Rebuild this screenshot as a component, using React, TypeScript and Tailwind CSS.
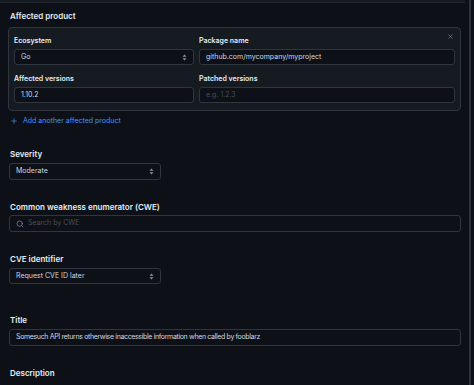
import { Search, X, Plus } from "lucide-react";

const font = { fontFamily: "Inter, 'Noto Sans', sans-serif" };

const SelectArrows = () => (
  <svg width="5" height="7" viewBox="0 0 5 7" className="shrink-0">
    <path d="M2.5 0.5 L4.5 2.7 L0.5 2.7 Z" fill="#8b949e" />
    <path d="M2.5 6.5 L4.5 4.3 L0.5 4.3 Z" fill="#8b949e" />
  </svg>
);

const Label = ({ children }) => (
  <div className="text-[7px] leading-[10px] font-semibold text-[#e6edf3] mb-[3px]">{children}</div>
);

const Heading = ({ children, className = "" }) => (
  <div className={`text-[8px] leading-[10px] font-semibold text-[#e6edf3] ${className}`}>{children}</div>
);

const SelectBox = ({ value, className = "" }) => (
  <div
    className={`flex items-center justify-between rounded-[3px] border border-[#30363d] bg-[#0d1117] px-[6px] text-[7px] text-[#d1d7e0] ${className}`}
  >
    <span>{value}</span>
    <SelectArrows />
  </div>
);

const InputBox = ({ value, placeholder = false, className = "" }) => (
  <div
    className={`flex items-center rounded-[3px] border border-[#30363d] bg-[#0d1117] px-[6px] text-[7px] ${
      placeholder ? "text-[#484f58]" : "text-[#d1d7e0]"
    } ${className}`}
  >
    {value}
  </div>
);

export default function App() {
  return (
    <div className="w-[474px] h-[385px] bg-[#0d1117] overflow-hidden flex" style={font}>
      <div className="w-[471px] h-full border-r-2 border-[#2d333b] relative">
        <div className="h-[3px] bg-[#161b22] border-b border-[#21262d] mr-[4px]" />
        <div className="pl-[9px] pr-[8px]">
          <Heading className="mt-[8px] pl-[1px]">Affected product</Heading>

          {/* affected product card */}
          <div className="relative mt-[6px] -ml-[1px] rounded-[4px] border border-[#30363d] bg-[#161b22] px-[5px] pt-[8px] pb-[7px]">
            <X className="absolute top-[5px] right-[6px] text-[#8b949e]" size={7} strokeWidth={2} />
            <div className="grid grid-cols-[180px_1fr] gap-x-[5px] gap-y-[9px]">
              <div>
                <Label>Ecosystem</Label>
                <SelectBox value="Go" className="h-[16px]" />
              </div>
              <div>
                <Label>Package name</Label>
                <InputBox value="github.com/mycompany/myproject" className="h-[16px]" />
              </div>
              <div>
                <Label>Affected versions</Label>
                <InputBox value="1.10.2" className="h-[16px]" />
              </div>
              <div>
                <Label>Patched versions</Label>
                <InputBox value="e.g. 1.2.3" placeholder className="h-[16px]" />
              </div>
            </div>
          </div>

          <div className="mt-[5px] flex items-center gap-[5px] text-[7px] leading-[10px] text-[#4493f8] pl-[1px]">
            <Plus size={8} strokeWidth={2} />
            <span>Add another affected product</span>
          </div>

          <Heading className="mt-[23px] pl-[1px]">Severity</Heading>
          <SelectBox value="Moderate" className="mt-[4px] w-[152px] h-[17px]" />

          <Heading className="mt-[22px] pl-[1px]">Common weakness enumerator (CWE)</Heading>
          <div className="mt-[3px] flex items-center gap-[4px] rounded-[3px] border border-[#30363d] bg-[#0d1117] px-[6px] h-[17px] text-[7px] text-[#484f58]">
            <Search size={8} strokeWidth={2} className="text-[#8b949e]" />
            <span>Search by CWE</span>
          </div>

          <Heading className="mt-[22px] pl-[1px]">CVE identifier</Heading>
          <SelectBox value="Request CVE ID later" className="mt-[4px] w-[152px] h-[16px]" />

          <Heading className="mt-[31px] pl-[1px]">Title</Heading>
          <InputBox
            value="Somesuch API returns otherwise inaccessible information when called by fooblarz"
            className="mt-[4px] h-[17px] tracking-[-0.35px]"
          />

          <Heading className="mt-[22px] pl-[1px]">Description</Heading>
        </div>
      </div>
    </div>
  );
}
